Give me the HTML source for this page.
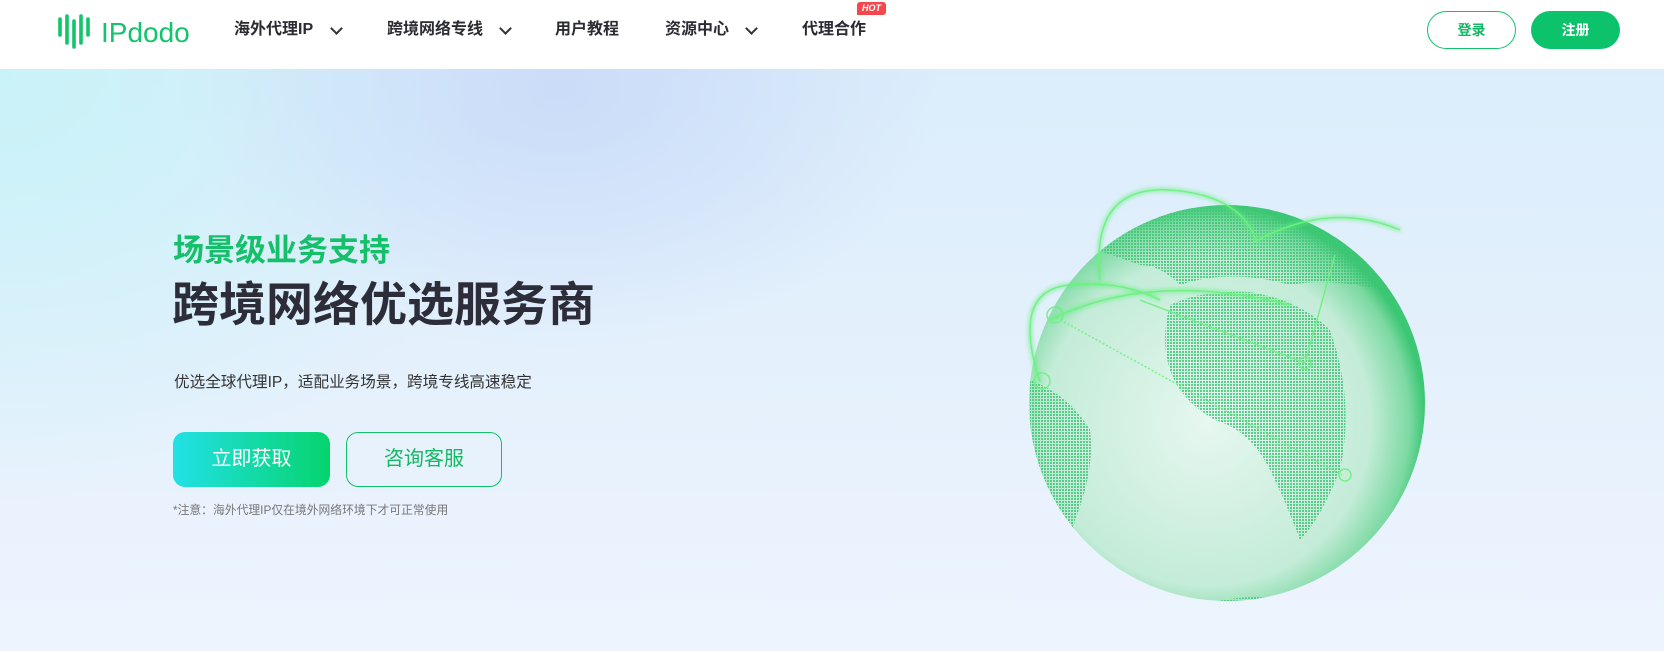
<!DOCTYPE html>
<html><head><meta charset="utf-8"><style>
*{margin:0;padding:0;box-sizing:border-box}
body{width:1664px;height:651px;overflow:hidden;font-family:"Liberation Sans","Noto Sans CJK SC",sans-serif;position:relative;
background:
radial-gradient(ellipse 380px 260px at 560px 90px,rgba(200,218,248,0.9),rgba(200,218,248,0) 100%),
radial-gradient(ellipse 520px 420px at 0px 80px,rgba(200,243,248,0.95),rgba(200,243,248,0) 100%),
linear-gradient(180deg,#d9ecfb 0%,#e3f0fc 50%,#eef4fe 100%);}
.nav{position:absolute;left:0;top:0;width:1664px;height:69px;background:#fff}
.nav .it{position:absolute;top:19px;font-size:16px;font-weight:bold;color:#2b2b33;line-height:22px}
.chev{position:absolute;top:24px;width:9px;height:9px;border-right:2px solid #333;border-bottom:2px solid #333;transform:rotate(45deg)}
.hot{position:absolute;left:857px;top:2px;width:29px;height:13px;background:#f4474e;color:#fff;font-size:9px;font-weight:bold;text-align:center;line-height:13px;border-radius:3px 3px 3px 0;font-style:italic}
.btn{position:absolute;top:11px;width:89px;height:38px;border-radius:19px;font-size:14px;font-weight:bold;text-align:center;line-height:36px}
.h1{position:absolute;left:173px;top:233px;font-size:31px;font-weight:bold;color:#16c06a;line-height:36px}
.h2{position:absolute;left:172px;top:278px;font-size:47px;font-weight:bold;color:#2d2d3a;line-height:54px}
.sub{position:absolute;left:174px;top:372px;font-size:15.6px;color:#333;line-height:22px}
.b1{position:absolute;left:173px;top:432px;width:157px;height:55px;border-radius:12px;background:linear-gradient(90deg,#22e0e6,#05d46d);color:#fff;font-size:20px;text-align:center;line-height:55px}
.b2{position:absolute;left:346px;top:432px;width:156px;height:55px;border-radius:12px;border:1px solid #12c26a;color:#12b862;font-size:20px;text-align:center;line-height:53px}
.note{position:absolute;left:173px;top:502px;font-size:11.8px;color:#777;line-height:16px}
</style></head><body>
<div class="nav">
<svg style="position:absolute;left:57px;top:13px" width="36" height="36" viewBox="0 0 36 36">
<g stroke="#12c46b" stroke-width="3.6" stroke-linecap="round" fill="none">
<line x1="3" y1="6" x2="3" y2="22"/><line x1="10" y1="3" x2="10" y2="30"/><line x1="17" y1="8" x2="17" y2="34"/><line x1="24" y1="3" x2="24" y2="30"/><line x1="31" y1="6" x2="31" y2="22"/></g></svg>
<div style="position:absolute;left:101px;top:16px;font-size:28px;color:#12c46b;line-height:34px">IPdodo</div>
<div class="it" style="left:234px">海外代理IP</div><div class="chev" style="left:332px"></div>
<div class="it" style="left:387px">跨境网络专线</div><div class="chev" style="left:501px"></div>
<div class="it" style="left:555px">用户教程</div>
<div class="it" style="left:665px">资源中心</div><div class="chev" style="left:747px"></div>
<div class="it" style="left:802px">代理合作</div><div class="hot">HOT</div>
<div class="btn" style="left:1427px;border:1px solid #12c26a;color:#12b862">登录</div>
<div class="btn" style="left:1531px;background:#0cc26a;color:#fff;line-height:38px">注册</div>
</div>
<div class="h1">场景级业务支持</div>
<div class="h2">跨境网络优选服务商</div>
<div class="sub">优选全球代理IP，适配业务场景，跨境专线高速稳定</div>
<div class="b1">立即获取</div>
<div class="b2">咨询客服</div>
<div class="note">*注意：海外代理IP仅在境外网络环境下才可正常使用</div>
<svg style="position:absolute;left:0;top:0" width="1664" height="651">
<defs>
<radialGradient id="g" cx="0.45" cy="0.55" r="0.55">
<stop offset="0" stop-color="#e6f7f0"/><stop offset="0.75" stop-color="#c4ecd8"/><stop offset="0.93" stop-color="#7cd9a2"/><stop offset="1" stop-color="#3cc774"/></radialGradient>
<pattern id="p" width="3" height="3" patternUnits="userSpaceOnUse"><rect width="2" height="2" fill="#3cc574"/></pattern>
<filter id="bl"><feGaussianBlur stdDeviation="2.5"/></filter>
<clipPath id="c"><circle cx="1227" cy="403" r="198"/></clipPath>
</defs>
<circle cx="1227" cy="403" r="198" fill="url(#g)"/>
<g clip-path="url(#c)" fill="url(#p)" opacity="0.8">
<path d="M1170 305 Q1200 290 1250 292 Q1300 300 1330 330 Q1355 400 1340 470 Q1320 520 1300 540 Q1285 500 1270 470 Q1250 430 1215 420 Q1180 400 1170 370 Q1160 340 1170 305Z"/>
<path d="M1060 240 Q1140 200 1240 210 Q1320 225 1400 280 L1420 300 Q1340 275 1290 285 Q1230 268 1180 285 Q1160 265 1140 265 Q1100 250 1060 240Z"/>
<path d="M1030 380 Q1070 395 1090 430 Q1095 470 1075 520 Q1065 560 1070 600 L1030 600Z"/>
<path d="M1175 615 Q1230 590 1290 600 L1300 620 L1170 625Z"/>
</g>
<g fill="none" stroke="#5ef07a" stroke-width="3" opacity="0.85" filter="url(#bl)">
<path d="M1040 382 Q1010 290 1070 285 Q1120 280 1160 300"/>
<path d="M1050 320 Q1150 270 1290 305"/>
<path d="M1100 280 Q1090 185 1170 190 Q1240 195 1256 240"/>
<path d="M1254 242 Q1330 200 1400 230"/>
</g>
<g fill="none" stroke="#6cf27e" stroke-width="1.5" opacity="0.9">
<path d="M1040 382 Q1010 290 1070 285 Q1120 280 1160 300"/>
<path d="M1050 320 Q1150 270 1290 305"/>
<path d="M1100 280 Q1090 185 1170 190 Q1240 195 1256 240"/>
<path d="M1254 242 Q1330 200 1400 230"/>
<path d="M1057 318 L1342 475" stroke-dasharray="2 2"/>
<path d="M1140 300 L1305 363 L1335 255"/>
<circle cx="1055" cy="315" r="8"/><circle cx="1042" cy="381" r="8"/><circle cx="1305" cy="363" r="6"/><circle cx="1345" cy="475" r="6"/>
</g>
</svg>
</body></html>
